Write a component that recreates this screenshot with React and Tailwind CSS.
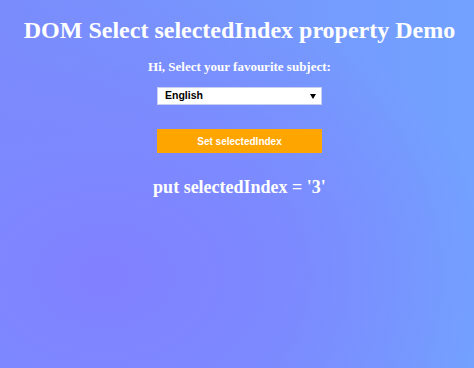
import React, { useState } from 'react';

export default function App() {
  const [subject, setSubject] = useState('English');
  const [result, setResult] = useState("put selectedIndex = '3'");

  return (
    <div className="w-[474px] h-[368px] overflow-hidden pl-[5px] bg-[radial-gradient(ellipse_at_22%_75%,#8180ff_0%,#7d88ff_30%,rgba(112,160,255,0)_75%),linear-gradient(90deg,#7a8cfb,#72a2ff)] flex flex-col items-center text-white">
      <h1 className="mt-[16px] text-[24px] leading-[28px] font-bold font-['Liberation_Serif',serif]">
        DOM Select selectedIndex property Demo
      </h1>
      <p className="mt-[15px] text-[13px] leading-[16px] font-bold font-['Liberation_Serif',serif]">
        Hi, Select your favourite subject:
      </p>
      <div className="mt-[12px] relative w-[165px] h-[18px]">
        <select
          value={subject}
          onChange={(e) => setSubject(e.target.value)}
          className="block appearance-none w-full h-full bg-white text-black border border-[#c8d0f0] pl-[7px] text-[10.5px] font-bold font-['Liberation_Sans',sans-serif] outline-none"
        >
          <option>Math</option>
          <option>Science</option>
          <option>Hindi</option>
          <option>English</option>
        </select>
        <span className="absolute right-[6px] top-[7px] w-0 h-0 border-l-[3px] border-r-[3px] border-t-[5px] border-l-transparent border-r-transparent border-t-black pointer-events-none" />
      </div>
      <button
        onClick={() => setResult("put selectedIndex = '3'")}
        className="mt-[24px] w-[165px] h-[24px] bg-[#ffa500] text-white text-[10px] font-bold font-['Liberation_Sans',sans-serif]"
      >
        Set selectedIndex
      </button>
      <p className="mt-[23px] text-[18px] leading-[22px] font-bold font-['Liberation_Serif',serif]">
        {result}
      </p>
    </div>
  );
}
